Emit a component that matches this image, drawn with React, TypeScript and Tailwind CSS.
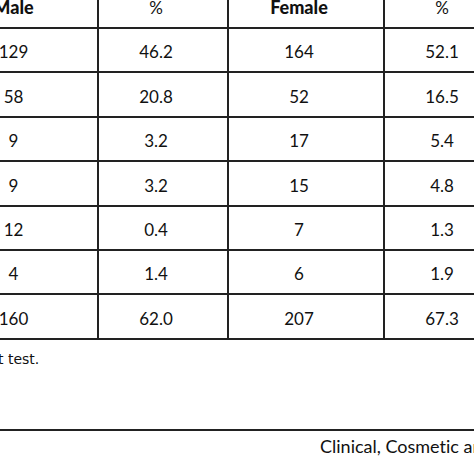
const rows = [
  ['129', '46.2', '164', '52.1'],
  ['58', '20.8', '52', '16.5'],
  ['9', '3.2', '17', '5.4'],
  ['9', '3.2', '15', '4.8'],
  ['12', '0.4', '7', '1.3'],
  ['4', '1.4', '6', '1.9'],
  ['160', '62.0', '207', '67.3'],
];

const cols = 'grid grid-cols-[155px_130px_156px_130px]';
const cell = 'flex items-center justify-center pr-[14px] pt-[4px] border-r-2 border-[#222]';

export default function App() {
  return (
    <div className="w-[474px] h-[474px] overflow-hidden bg-white text-[#111] font-['Lato',sans-serif] [font-variant-ligatures:none]">
      <div className="ml-[-56px] mt-[-15.4px] w-[571px]">
        <div className={`${cols} h-[44.4px] border-b-2 border-[#222] text-[17px]`}>
          <div className={`${cell} font-black text-[18px] pt-[0px]`}>Male</div>
          <div className={`${cell} pt-[0px]`}>%</div>
          <div className={`${cell} font-black text-[18px] pt-[0px]`}>Female</div>
          <div className={`${cell} border-r-0 pt-[0px]`}>%</div>
        </div>
        {rows.map((r, i) => (
          <div key={i} className={`${cols} h-[44.4px] border-b-2 border-[#222] text-[17px]`}>
            <div className={cell}>{r[0]}</div>
            <div className={cell}>{r[1]}</div>
            <div className={cell}>{r[2]}</div>
            <div className={`${cell} border-r-0`}>{r[3]}</div>
          </div>
        ))}
      </div>

      <p className="mt-[12px] ml-[-2px] text-[14px] leading-none font-['DejaVu_Sans',sans-serif]">t test.</p>

      <div className="mt-[63px] border-t-2 border-[#222]">
        <p className="ml-[320px] pt-[6px] whitespace-nowrap text-[18px] leading-none">
          Clinical, Cosmetic and Investigational Dermatology
        </p>
      </div>
    </div>
  );
}
